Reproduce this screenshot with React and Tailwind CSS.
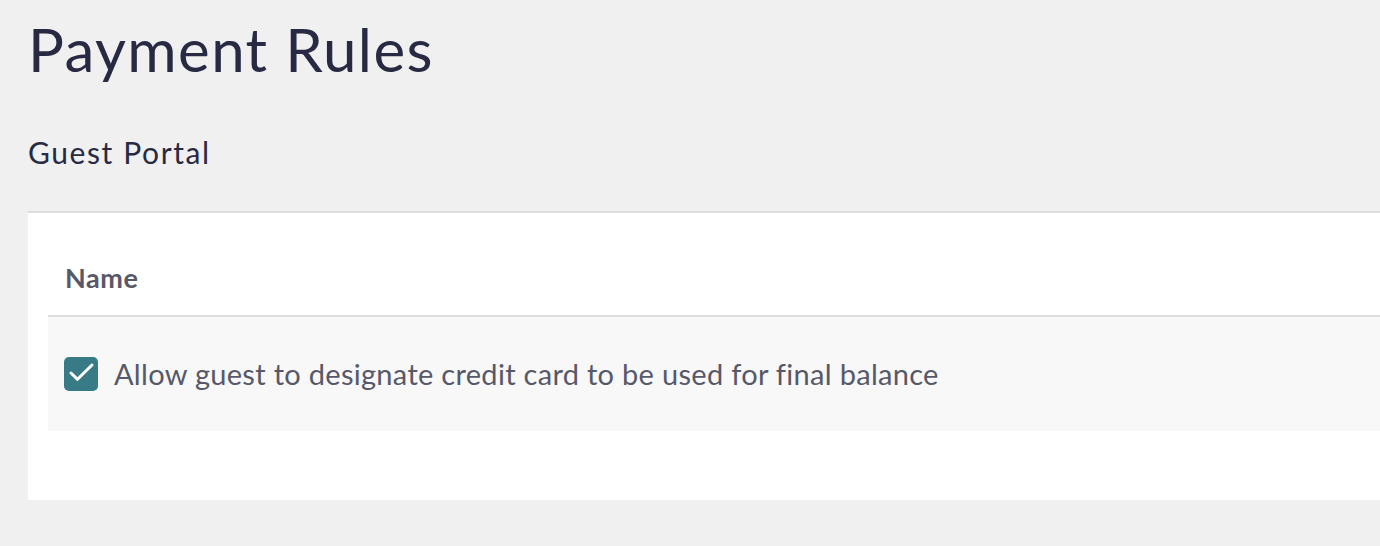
import React, { useState } from 'react';

const PaymentRules = () => {
  const [allowGuest, setAllowGuest] = useState(true);

  return (
    <div className="min-h-[546px] bg-[#f0f0f0] pl-[28px] pt-[13px] overflow-hidden" style={{ fontFamily: 'Lato, "Open Sans", sans-serif' }}>
      <h1 className="text-[60px] leading-[72px] tracking-[1.4px] text-[#272a42] font-normal">Payment Rules</h1>
      <h2 className="mt-[49px] text-[30px] leading-[36px] tracking-[1.6px] text-[#272a42]">Guest Portal</h2>

      <div className="mt-[41px] bg-white border-t-2 border-[#dcdcdf] pl-[20px] pb-[69px]">
        <div className="h-[104px] flex items-center pl-[17px] pt-[28px] border-b-2 border-[#dddddd]">
          <span className="text-[27px] tracking-[0.6px] font-bold text-[#575869]">Name</span>
        </div>
        <div className="h-[114px] bg-[#f8f8f8] flex items-center pl-[16px] gap-[16px]">
          <button
            onClick={() => setAllowGuest(!allowGuest)}
            className={`w-[34px] h-[34px] shrink-0 rounded-[5px] flex items-center justify-center ${allowGuest ? 'bg-[#387a86]' : 'bg-white border-2 border-[#c0c0c8]'}`}
          >
            {allowGuest && (
              <svg width="34" height="34" viewBox="0 0 34 34" fill="none">
                <path d="M7 16 L13.5 22.3 L28 8" stroke="white" strokeWidth="3" strokeLinecap="round" strokeLinejoin="round" />
              </svg>
            )}
          </button>
          <span className="text-[29px] tracking-[0.3px] text-[#575869]">Allow guest to designate credit card to be used for final balance</span>
        </div>
      </div>
    </div>
  );
};

export default PaymentRules;
